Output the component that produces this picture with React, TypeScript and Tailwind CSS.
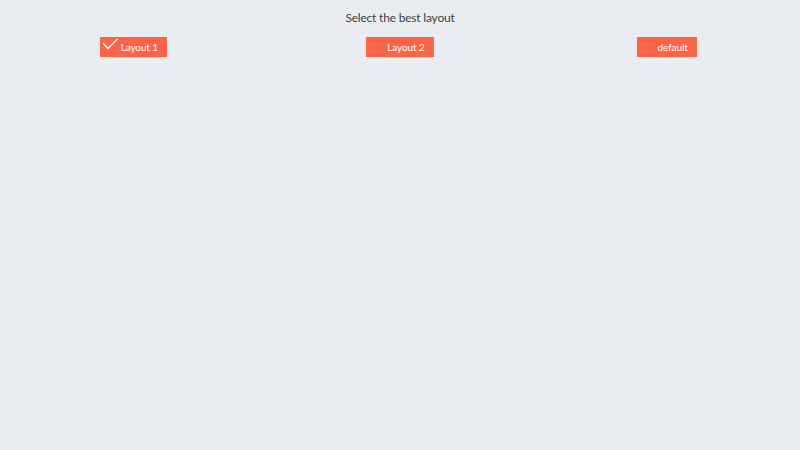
import React, { useState } from 'react';

type Option = { key: string; label: string };

const options: Option[] = [
  { key: 'layout1', label: 'Layout 1' },
  { key: 'layout2', label: 'Layout 2' },
  { key: 'default', label: 'default' },
];

function Check() {
  return (
    <svg
      className="absolute left-[2px] top-[1px]"
      width="17"
      height="13"
      viewBox="0 0 17 13"
      fill="none"
      stroke="white"
      strokeWidth="1.4"
    >
      <path d="M1 5 L6 10.5 L15.5 1" />
    </svg>
  );
}

export default function App() {
  const [selected, setSelected] = useState('layout1');

  return (
    <div className="min-h-[450px] w-full bg-[#eaedf0] font-['Lato',sans-serif]">
      <h1 className="pt-[10px] text-center text-[12px] leading-[16px] tracking-[-0.2px] text-[#3b4047]">
        Select the best layout
      </h1>
      <div className="mt-[11px] grid grid-cols-3 justify-items-center">
        {options.map((opt) => (
          <button
            key={opt.key}
            onClick={() => setSelected(opt.key)}
            className="relative h-[20px] bg-[#ff6347] pl-[21px] pr-[9px] text-[10px] leading-[20px] tracking-[-0.1px] text-white"
          >
            {selected === opt.key && <Check />}
            {opt.label}
          </button>
        ))}
      </div>
    </div>
  );
}
